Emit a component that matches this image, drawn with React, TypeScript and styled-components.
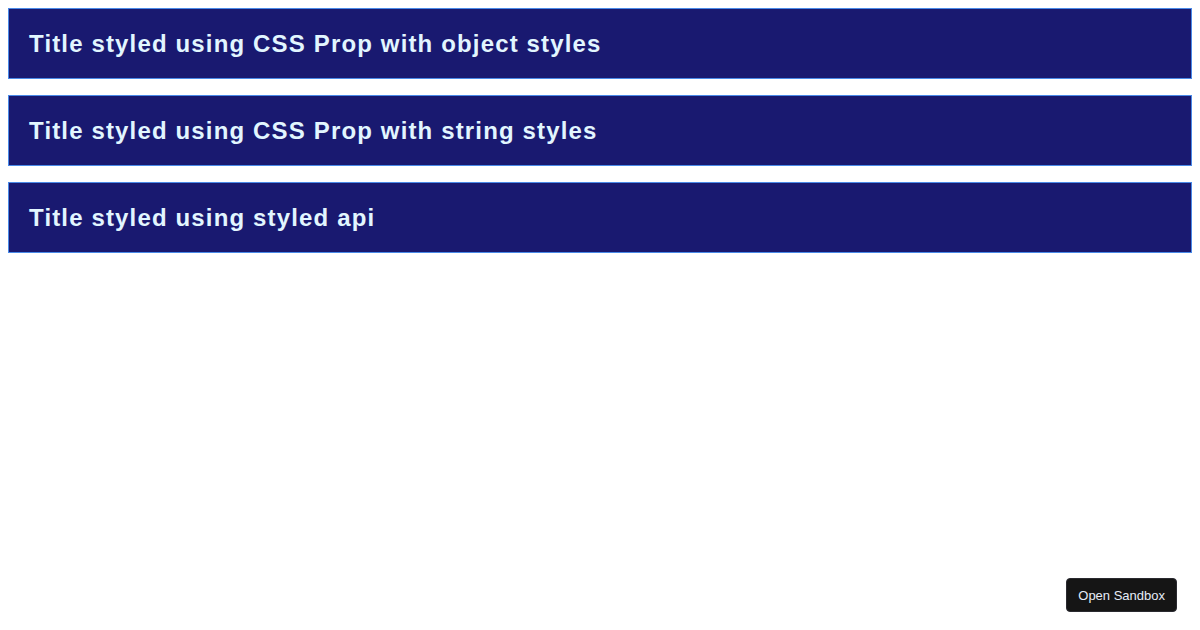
import React from 'react';
import styled, { createGlobalStyle } from 'styled-components';

const GlobalStyle = createGlobalStyle`
  body {
    margin: 8px;
    background: #ffffff;
    font-family: "Liberation Sans", Arial, sans-serif;
  }
`;

const Title = styled.h1`
  margin: 0 0 16px;
  padding: 21px 20px 20px;
  background: midnightblue;
  border: 1px solid #4a8ae8;
  color: #e2f6ff;
  font-family: "Liberation Sans", Arial, sans-serif;
  font-size: 24px;
  line-height: 28px;
  font-weight: bold;
  letter-spacing: 1.15px;
`;

const SandboxButton = styled.button`
  position: fixed;
  right: 23px;
  bottom: 18px;
  height: 34px;
  padding: 0 11px;
  background: #151515;
  border: 1px solid #2a2a30;
  border-radius: 4px;
  color: #e6ecf8;
  font-family: "Liberation Sans", Arial, sans-serif;
  font-size: 13px;
  cursor: pointer;
`;

export default function App() {
  return (
    <>
      <GlobalStyle />
      <Title>Title styled using CSS Prop with object styles</Title>
      <Title>Title styled using CSS Prop with string styles</Title>
      <Title>Title styled using styled api</Title>
      <SandboxButton>Open Sandbox</SandboxButton>
    </>
  );
}
